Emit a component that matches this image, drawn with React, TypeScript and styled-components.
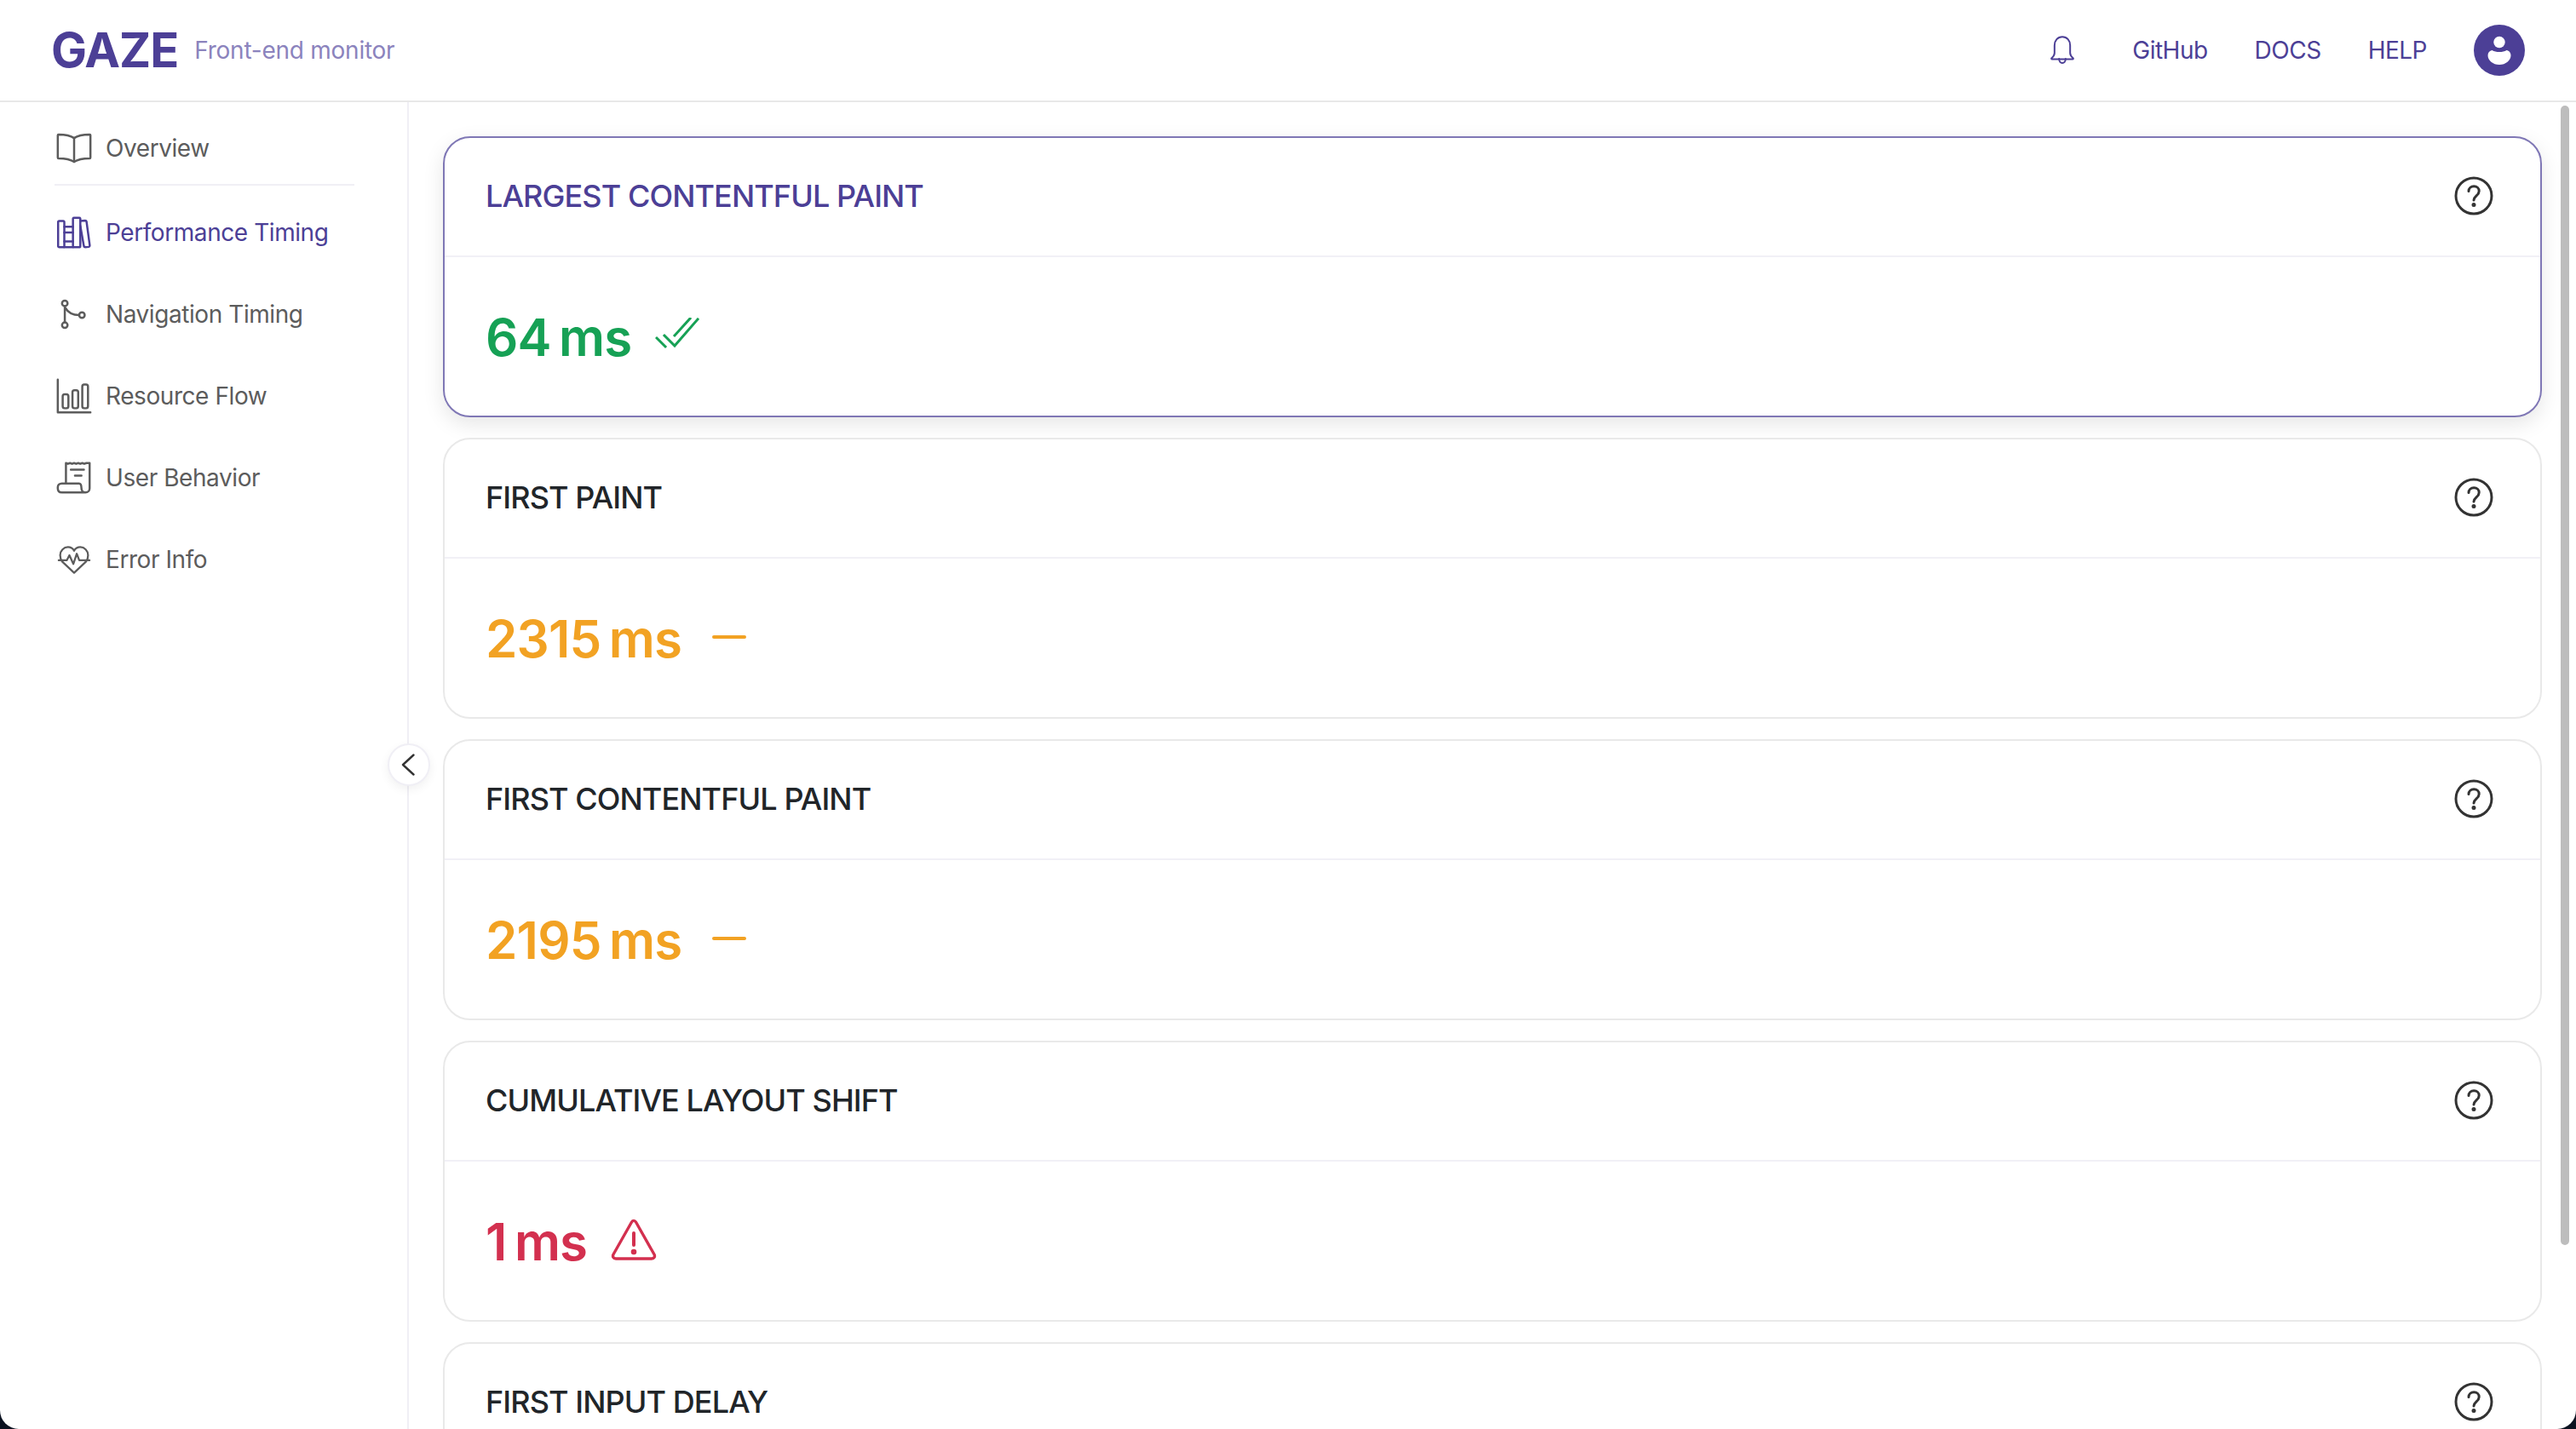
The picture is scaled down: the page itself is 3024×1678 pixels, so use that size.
import { ReactNode } from "react";
import styled, { createGlobalStyle } from "styled-components";

const PURPLE = "#4c3f96";
const GREY = "#5c5c5c";

const GlobalStyle = createGlobalStyle`
  html, body {
    margin: 0;
    padding: 0;
    height: 100%;
    overflow: hidden;
    background: #0b1220;
    font-family: Inter, "Noto Sans", sans-serif;
  }
  #root {
    height: 100%;
  }
`;

type Tone = "good" | "warn" | "bad";

const toneColors: Record<Tone, string> = {
  good: "#16a155",
  warn: "#f2a223",
  bad: "#d3304f",
};

const Svg = ({ size, children, sw = 1.3 }: { size: number; children: ReactNode; sw?: number }) => (
  <svg
    width={size}
    height={size}
    viewBox="0 0 24 24"
    fill="none"
    stroke="currentColor"
    strokeWidth={sw}
    strokeLinecap="round"
    strokeLinejoin="round"
  >
    {children}
  </svg>
);

const BookIcon = () => (
  <Svg size={46}>
    <path d="M12 5.800C10 4.400 7 3.600 2.500 3.600c-.3 0-.5.2-.5.5v13.600c0 .3.2.5.5.5 4.500 0 7.500.8 9.500 2.200 2-1.400 5-2.200 9.500-2.200.3 0 .5-.2.5-.5V4.100c0-.3-.2-.5-.5-.5-4.500 0-7.500.8-9.500 2.200Z" />
    <path d="M12 5.800V20.400" />
  </Svg>
);

const BooksIcon = () => (
  <Svg size={46}>
    <rect x="2.200" y="5" width="3.800" height="16" rx="0.700" />
    <path d="M6 8.500h5.300M6 12h5.300M6 17.500h5.300M6 21h5.300" />
    <rect x="11.300" y="3" width="4.500" height="18" rx="0.700" />
    <path d="M15.800 5l3-.3c.4 0 .7.200.8.600l2 14.700c0 .4-.2.700-.6.800l-2.200.2c-.4 0-.7-.2-.8-.6L15.800 8" />
  </Svg>
);

const BranchIcon = () => (
  <Svg size={46}>
    <circle cx="6.300" cy="5.300" r="1.700" />
    <circle cx="6.300" cy="18.700" r="1.700" />
    <circle cx="16.800" cy="12.500" r="1.700" />
    <path d="M6.300 7V17M6.600 8C8 10.500 11 12.500 15.100 12.500" />
  </Svg>
);

const ChartIcon = () => (
  <Svg size={46}>
    <path d="M2 2V22H22" />
    <rect x="5" y="11" width="3.500" height="8.500" rx="1.200" />
    <rect x="11" y="8.500" width="3.500" height="11" rx="1.200" />
    <rect x="17" y="5" width="3.500" height="14.500" rx="1.200" />
  </Svg>
);

const ReceiptIcon = () => (
  <Svg size={46}>
    <path d="M7 15.500V3L8.250 3.500 9.500 3 10.750 3.500 12 3 13.250 3.500 14.500 3 15.750 3.500 17 3 18.250 3.500 19.500 3 21.500 3V18.500a2.500 2.500 0 0 1-5 0c0-1.200-.2-3-1.500-3H4.500C3 15.500 2 16.500 2 17.800V18.500C2 20 3 21 4.500 21H19" />
    <path d="M10 7H18M12.500 10.700H16.500" />
  </Svg>
);

const PulseIcon = () => (
  <Svg size={46}>
    <g transform="translate(1.200 0.800) scale(0.900)">
      <path d="M4 14C2.800 12.500 2.500 11 2.500 9.500 2.500 6.500 5 4 7.800 4c1.800 0 3.300.8 4.200 2.500C12.900 4.800 14.400 4 16.200 4c2.800 0 5.300 2.500 5.300 5.500 0 1.500-.3 3-1.500 4.500l-8 7.500L4 14Z" />
      <path d="M1.500 13H7l1.800-3.500 2.700 6 2.300-7 1.700 4.500h7" />
    </g>
  </Svg>
);

const BellIcon = () => (
  <Svg size={40} sw={1.2}>
    <path d="M12 2.500c-3.300 0-5.500 2.700-5.500 6v5.500c0 1.500-.8 2.500-2 3.500-.4.300-.2.800.3.800h14.400c.5 0 .7-.5.300-.8-1.200-1-2-2-2-3.500V8.500c0-3.300-2.200-6-5.500-6Z" />
    <path d="M9.700 18c0 1.700 1 3 2.300 3s2.300-1.300 2.300-3" />
  </Svg>
);

const HelpIcon = () => (
  <Svg size={48} sw={1.5}>
    <circle cx="12" cy="12" r="10.500" />
    <path d="M9 9.300C9 7.500 10.400 6.400 12.100 6.400c1.700 0 3 1.100 3 2.800 0 2.600-3.100 2.800-3.100 5.300" />
    <circle cx="12" cy="17.300" r="0.500" fill="currentColor" />
  </Svg>
);

const DoubleCheck = () => (
  <svg width="56" height="42" viewBox="0 0 56 42" fill="none" stroke="currentColor" strokeWidth="3" strokeLinecap="square">
    <path d="M2 24 L12 34" />
    <path d="M11 21 L23 33 L50 2" />
    <path d="M23 21 L41 1" />
  </svg>
);

const Dash = () => (
  <svg width="40" height="6" viewBox="0 0 40 6" stroke="currentColor" strokeWidth="4" strokeLinecap="round">
    <path d="M2 3H38" />
  </svg>
);

const AlertIcon = () => (
  <svg width="54" height="50" viewBox="0 0 54 50" fill="none" stroke="currentColor" strokeWidth="3.400" strokeLinecap="round" strokeLinejoin="round">
    <path d="M24.500 4 L3 42 C1.800 44.500 3 47 6 47 H48 C51 47 52.200 44.500 51 42 L29.500 4 C28.200 1.800 25.800 1.800 24.500 4 Z" />
    <path d="M27 17 V31" strokeWidth="4" />
    <circle cx="27" cy="39" r="1.600" fill="currentColor" />
  </svg>
);

const ChevronIcon = () => (
  <svg width="16" height="26" viewBox="0 0 16 26" fill="none" stroke="#333" strokeWidth="2.400" strokeLinecap="round" strokeLinejoin="round">
    <path d="M14.500 1.500 L2 13 L14.500 24.500" />
  </svg>
);

const Window = styled.div`
  height: 100%;
  display: flex;
  flex-direction: column;
  background: #fff;
  border-radius: 0 0 22px 22px;
  overflow: hidden;
  position: relative;
`;

const Header = styled.header`
  flex: none;
  height: 118px;
  border-bottom: 2px solid #e8e8e8;
  display: flex;
  align-items: center;
  padding: 0 60px;
`;

const Logo = styled.span`
  font-size: 56px;
  font-weight: 700;
  color: ${PURPLE};
  letter-spacing: -1px;
`;

const Tagline = styled.span`
  margin-left: 19px;
  font-size: 28px;
  letter-spacing: -0.25px;
  color: #8b83bd;
`;

const HeaderRight = styled.nav`
  margin-left: auto;
  display: flex;
  align-items: center;
  color: ${PURPLE};
`;

const BellWrap = styled.span`
  display: flex;
  margin-right: 62px;
`;

const HeaderLink = styled.a`
  font-size: 28px;
  letter-spacing: -0.5px;
  color: ${PURPLE};
  margin-right: 55px;
`;

const Avatar = styled.span`
  width: 60px;
  height: 60px;
  border-radius: 50%;
  background: ${PURPLE};
  display: flex;
  align-items: center;
  justify-content: center;
`;

const Body = styled.div`
  flex: 1;
  min-height: 0;
  display: flex;
  position: relative;
`;

const Sidebar = styled.aside`
  flex: none;
  width: 480px;
  box-sizing: border-box;
  border-right: 2px solid #f0eff5;
  padding: 0 62px 0 64px;
`;

const NavItem = styled.div<{ $active?: boolean; $divider?: boolean }>`
  height: ${({ $divider }) => ($divider ? "98px" : "96px")};
  box-sizing: border-box;
  display: flex;
  align-items: center;
  gap: 14px;
  font-size: 28px;
  letter-spacing: -0.43px;
  color: ${({ $active }) => ($active ? PURPLE : GREY)};
  padding-top: ${({ $divider }) => ($divider ? "12px" : "0")};
  margin-bottom: ${({ $divider }) => ($divider ? "7px" : "0")};
  border-bottom: ${({ $divider }) => ($divider ? "2px solid #f0eff5" : "none")};
  svg {
    flex: none;
  }
`;

const Main = styled.main`
  flex: 1;
  min-width: 0;
  overflow: hidden;
  padding: 40px 40px 0 40px;
  display: flex;
  flex-direction: column;
  gap: 24px;
`;

const Card = styled.section<{ $active?: boolean }>`
  flex: none;
  height: 330px;
  box-sizing: border-box;
  border-radius: 32px;
  background: #fff;
  border: 2px solid ${({ $active }) => ($active ? "#7f77b5" : "#e9e9e9")};
  box-shadow: ${({ $active }) => ($active ? "0 8px 24px rgba(0, 0, 0, 0.1)" : "none")};
`;

const CardHead = styled.div`
  height: 140px;
  box-sizing: border-box;
  padding: 0 54px 2px 48px;
  border-bottom: 2px solid #f1f0f6;
  display: flex;
  align-items: center;
  justify-content: space-between;
`;

const CardTitle = styled.h2<{ $active?: boolean }>`
  margin: 0;
  font-size: 36px;
  font-weight: 500;
  letter-spacing: -0.9px;
  color: ${({ $active }) => ($active ? PURPLE : "#212529")};
`;

const HelpWrap = styled.span`
  display: flex;
  color: #333;
`;

const CardBody = styled.div<{ $tone: Tone }>`
  height: 186px;
  box-sizing: border-box;
  padding: 2px 0 0 48px;
  display: flex;
  align-items: center;
  color: ${({ $tone }) => toneColors[$tone]};
`;

const Value = styled.span`
  font-size: 60px;
  font-weight: 600;
  letter-spacing: -0.8px;
  word-spacing: -5px;
`;

const StatusIcon = styled.span<{ $tone: Tone }>`
  display: flex;
  margin-left: ${({ $tone }) => ($tone === "warn" ? "36px" : "28px")};
  margin-top: -4px;
`;

const CollapseButton = styled.button`
  position: absolute;
  left: 455px;
  top: 753px;
  width: 50px;
  height: 50px;
  box-sizing: border-box;
  padding: 0 2px 0 0;
  border: 2px solid #f0eff5;
  border-radius: 50%;
  background: #fff;
  box-shadow: 0 4px 12px rgba(0, 0, 0, 0.06);
  display: flex;
  align-items: center;
  justify-content: center;
`;

const ScrollThumb = styled.div`
  position: absolute;
  right: 8px;
  top: 4px;
  width: 10px;
  height: 1338px;
  border-radius: 5px;
  background: #bdbdbd;
`;

const navItems = [
  { label: "Overview", Icon: BookIcon, divider: true },
  { label: "Performance Timing", Icon: BooksIcon, active: true },
  { label: "Navigation Timing", Icon: BranchIcon },
  { label: "Resource Flow", Icon: ChartIcon },
  { label: "User Behavior", Icon: ReceiptIcon },
  { label: "Error Info", Icon: PulseIcon },
];

// the last card runs off the bottom of the window, its value is never seen
const metrics: { title: string; value?: string; tone: Tone; active?: boolean }[] = [
  { title: "LARGEST CONTENTFUL PAINT", value: "64 ms", tone: "good", active: true },
  { title: "FIRST PAINT", value: "2315 ms", tone: "warn" },
  { title: "FIRST CONTENTFUL PAINT", value: "2195 ms", tone: "warn" },
  { title: "CUMULATIVE LAYOUT SHIFT", value: "1 ms", tone: "bad" },
  { title: "FIRST INPUT DELAY", tone: "good" },
];

const statusIcons = {
  good: <DoubleCheck />,
  warn: <Dash />,
  bad: <AlertIcon />,
};

export default function App() {
  return (
    <>
      <GlobalStyle />
      <Window>
        <Header>
          <Logo>GAZE</Logo>
          <Tagline>Front-end monitor</Tagline>
          <HeaderRight>
            <BellWrap>
              <BellIcon />
            </BellWrap>
            <HeaderLink>GitHub</HeaderLink>
            <HeaderLink>DOCS</HeaderLink>
            <HeaderLink>HELP</HeaderLink>
            <Avatar>
              <svg width="30" height="36" viewBox="0 0 30 36" fill="#fff">
                <circle cx="15" cy="8.500" r="6.700" />
                <path d="M1.500 24c0-3 2-5.500 5-6 2.500 1.500 5 2 8.500 2s6-.5 8.500-2c3 .5 5 3 5 6 0 6-6 11-13.500 11S1.500 30 1.500 24Z" />
              </svg>
            </Avatar>
          </HeaderRight>
        </Header>
        <Body>
          <Sidebar>
            {navItems.map(({ label, Icon, active, divider }) => (
              <NavItem key={label} $active={active} $divider={divider}>
                <Icon />
                {label}
              </NavItem>
            ))}
          </Sidebar>
          <Main>
            {metrics.map((m) => (
              <Card key={m.title} $active={m.active}>
                <CardHead>
                  <CardTitle $active={m.active}>{m.title}</CardTitle>
                  <HelpWrap>
                    <HelpIcon />
                  </HelpWrap>
                </CardHead>
                {m.value && (
                  <CardBody $tone={m.tone}>
                    <Value>{m.value}</Value>
                    <StatusIcon $tone={m.tone}>{statusIcons[m.tone]}</StatusIcon>
                  </CardBody>
                )}
              </Card>
            ))}
          </Main>
          <CollapseButton aria-label="collapse">
            <ChevronIcon />
          </CollapseButton>
          <ScrollThumb />
        </Body>
      </Window>
    </>
  );
}
